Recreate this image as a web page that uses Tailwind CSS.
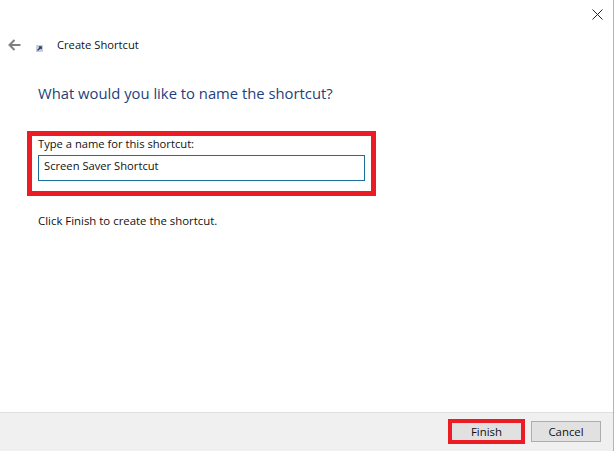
<!DOCTYPE html>
<html lang="en">
  <head>
    <meta charset="UTF-8" />
    <title>Create Shortcut</title>
    <script src="https://cdn.jsdelivr.net/npm/@tailwindcss/browser@4"></script>
  </head>
  <body class="bg-white overflow-hidden">
    <div class="w-[614px] h-[451px] flex flex-col border-r border-[#b5b5b5] font-['Open_Sans','Noto_Sans',sans-serif] text-[12px] text-[#111]">
      <main class="flex-1 relative">
        <!-- close -->
        <svg class="absolute left-[592px] top-[9px]" width="11" height="11" viewBox="0 0 11 11" fill="none" stroke="#222" stroke-width="1">
          <path d="M0.5 0.5l10 10M10.5 0.5l-10 10" />
        </svg>
        <!-- header -->
        <div class="flex items-center h-[20px] mt-[35px] pl-[8px]">
          <svg width="13" height="12" viewBox="0 0 13 12" fill="none" stroke="#808080" stroke-width="2">
            <path d="M12.5 6H1.5M6.5 1L1.5 6l5 5" />
          </svg>
          <svg class="ml-[15px] mt-[6px]" width="7" height="7" viewBox="0 0 7 7">
            <rect width="7" height="7" fill="#c9d0e0" />
            <path d="M1.5 5.5L4.5 2.5M2.8 1.8H5.2V4.2" stroke="#26365f" stroke-width="1.2" fill="none" />
          </svg>
          <span class="ml-[14px] text-[11.2px]">Create Shortcut</span>
        </div>
        <h1 class="ml-[38px] mt-[27px] text-[14.8px] leading-[22px] text-[#1d3f7c]">What would you like to name the shortcut?</h1>
        <!-- name box -->
        <div class="ml-[27px] mt-[27px] w-[349px] h-[65px] border-[5px] border-[#ec1c24] pl-[6px]">
          <label class="block text-[11.2px] leading-[16px]">Type a name for this shortcut:</label>
          <div class="mt-[3px] w-[327px] h-[26px] border border-[#1c6e9f] pl-[5px] text-[11.2px] leading-[20px]">Screen Saver Shortcut</div>
        </div>
        <p class="ml-[38px] mt-[17px] text-[11.4px] leading-[16px]">Click Finish to create the shortcut.</p>
      </main>
      <!-- footer -->
      <footer class="h-[39px] bg-[#f0f0f0] border-t border-[#dfdfdf] flex items-start justify-end pt-[6px] pr-[12px] text-[11.4px]">
        <div class="w-[77px] h-[25px] border-[4px] border-[#ec1c24] bg-[#e1e1e1] flex items-center justify-center">Finish</div>
        <div class="ml-[6px] mt-[2px] w-[70px] h-[21px] border border-[#adadad] bg-[#e1e1e1] flex items-center justify-center">Cancel</div>
      </footer>
    </div>
  </body>
</html>
